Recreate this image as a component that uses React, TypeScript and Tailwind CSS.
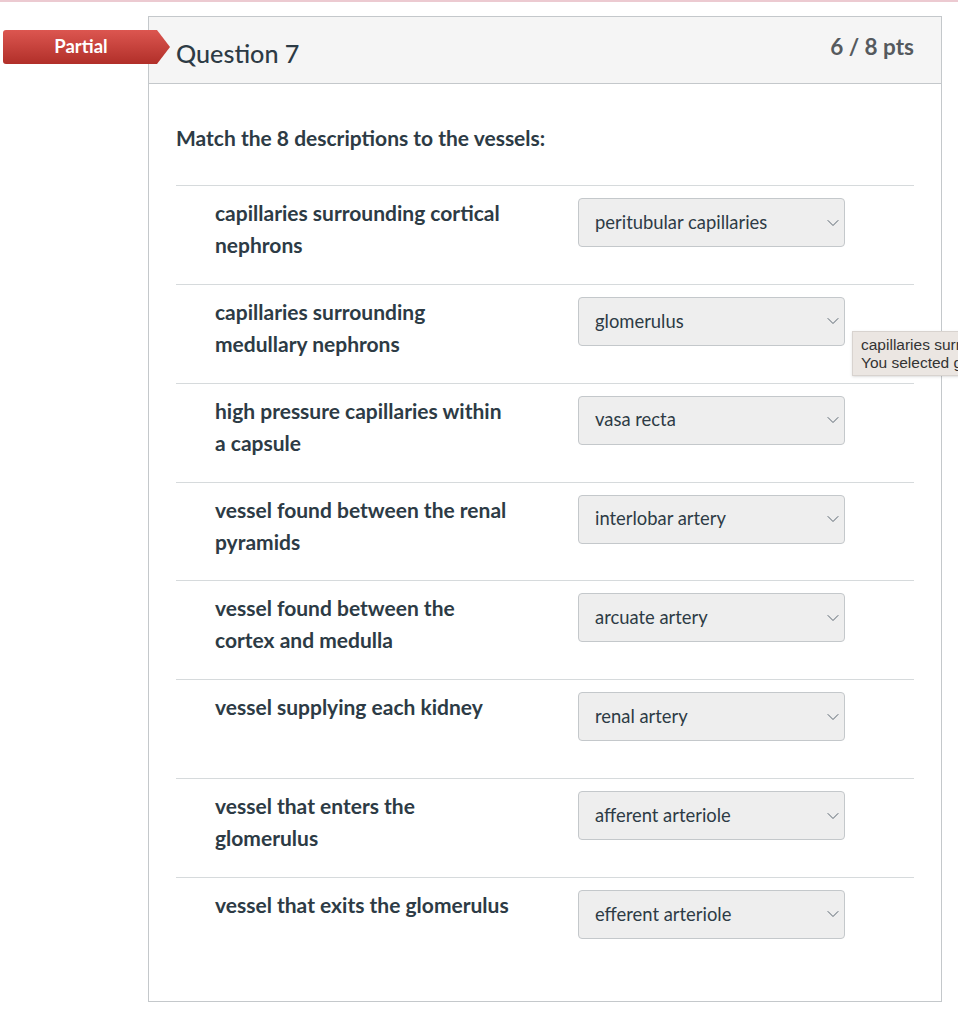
import { ChevronDown } from "lucide-react";

const rows = [
  { text: "capillaries surrounding cortical nephrons", answer: "peritubular capillaries" },
  { text: "capillaries surrounding medullary nephrons", answer: "glomerulus" },
  { text: "high pressure capillaries within a capsule", answer: "vasa recta" },
  { text: "vessel found between the renal pyramids", answer: "interlobar artery" },
  { text: "vessel found between the cortex and medulla", answer: "arcuate artery" },
  { text: "vessel supplying each kidney", answer: "renal artery" },
  { text: "vessel that enters the glomerulus", answer: "afferent arteriole" },
  { text: "vessel that exits the glomerulus", answer: "efferent arteriole" },
];

function Badge() {
  return (
    <div className="absolute left-[3px] top-[30px] w-[168px] h-[34px]">
      <svg width="168" height="34" viewBox="0 0 168 34" className="absolute inset-0">
        <defs>
          <linearGradient id="bg" x1="0" y1="0" x2="0" y2="1">
            <stop offset="0" stopColor="#dc5650" />
            <stop offset="1" stopColor="#b12f29" />
          </linearGradient>
        </defs>
        <path d="M3 0 H154 L167 17 L154 34 H3 Q0 34 0 31 V3 Q0 0 3 0 Z" fill="url(#bg)" />
      </svg>
      <div className="relative w-[156px] h-[34px] flex items-center justify-center text-white text-[18.5px] font-bold">
        Partial
      </div>
    </div>
  );
}

export default function App() {
  return (
    <div className="relative w-[958px] h-[1024px] overflow-hidden bg-white font-['Lato','Liberation_Sans',sans-serif] text-[#2d3b45]">
      <div className="h-[2px] bg-[#eccad1]" />
      <div className="pl-[148px] pt-[14px] pr-[16px]">
        <div className="border border-[#c4c8cb] h-[986px]">
          <div className="h-[67px] bg-[#f5f5f5] border-b border-[#c4c8cb] flex justify-between px-[27px]">
            <h2 className="text-[25.2px] font-medium pt-[19px] leading-[34px]">Question 7</h2>
            <div className="text-[22.5px] font-bold text-[#555a5e] pt-[15px] leading-[30px]">6 / 8 pts</div>
          </div>
          <div className="px-[27px]">
            <p className="text-[21px] font-bold mt-[40px] leading-[28px]">Match the 8 descriptions to the vessels:</p>
            <div className="mt-[33px]">
              {rows.map((r) => (
                <div key={r.text} className="h-[98.85px] border-t border-[#d6dadc] flex">
                  <div className="w-[402px] pl-[39px] pt-[11px]">
                    <div className="w-[300px] text-[21px] font-bold leading-[32px]">{r.text}</div>
                  </div>
                  <div className="pt-[12px]">
                    <div className="w-[267px] h-[49px] bg-[#eeeeee] border border-[#c4c8cb] rounded-[4px] flex items-center justify-between pl-[16px] pr-[1px]">
                      <span className="text-[18.4px]">{r.answer}</span>
                      <ChevronDown className="w-[20px] h-[20px] text-[#4a5864]" strokeWidth={1.1} />
                    </div>
                  </div>
                </div>
              ))}
            </div>
          </div>
        </div>
      </div>
      <Badge />
      <div className="absolute left-[852px] top-[331px] w-[200px] h-[45px] bg-[#ebe6e2] border border-[#d8d3cf] shadow-sm pl-[8px] pt-[4px] text-[15.5px] leading-[18px] text-[#333333] font-['Liberation_Sans','Arial',sans-serif] whitespace-nowrap">
        <div>capillaries surrounding medullary nephrons</div>
        <div>You selected glomerulus</div>
      </div>
    </div>
  );
}
